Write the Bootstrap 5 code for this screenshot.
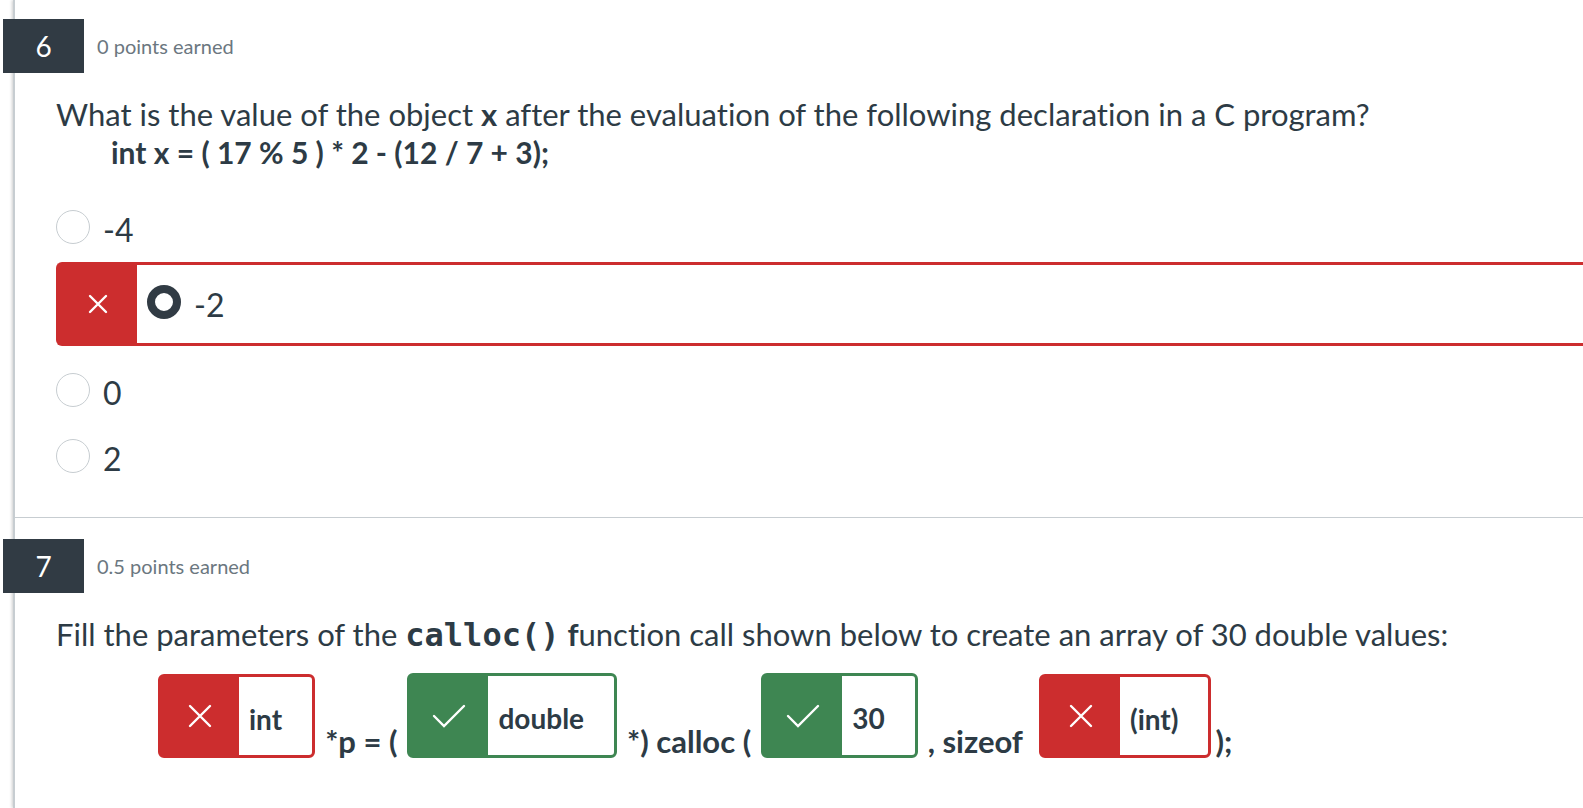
<!DOCTYPE html>
<html lang="en">
<head>
<meta charset="utf-8">
<meta name="viewport" content="width=device-width, initial-scale=1">
<title>Quiz results</title>
<link href="https://cdn.jsdelivr.net/npm/bootstrap@5.3.0/dist/css/bootstrap.min.css" rel="stylesheet">
<style>
  :root { --ink: #2d3b45; --rule: #c7cdd1; --wrong: #cc2d2e; --right: #3e8652; }
  body { font-family: Lato, sans-serif; font-size: 31px; line-height: 38px; font-variant-ligatures: none; color: var(--ink); background: #fff; overflow-x: hidden; }
  .quiz { margin-left: 13px; min-height: 100vh; border-left: 2px solid var(--rule); box-shadow: -1px 0 3px rgba(0, 0, 0, .2); }
  .question { padding: 19px 0 28px; border-bottom: 1px solid var(--rule); }
  .question + .question { padding-top: 21px; border-bottom: 0; }
  .number { width: 81px; height: 54px; margin-left: -12px; background: #313b44; color: #fff; font-size: 28px; }
  .points { margin-left: 13px; font-size: 20px; color: #6b7780; }
  .content-area { padding: 22px 0 0 41px; }
  .code-line { padding-left: 55px; font-size: 30px; }
  .choices { padding-top: 23px; }
  .choice { height: 66px; gap: 13px; font-size: 32px; }
  .choice label { padding-top: 6px; }
  .form-check-input.answer-radio { width: 34px; height: 34px; margin: 0; border: 1px solid var(--rule); background-image: none; opacity: 1; flex: none; }
  .form-check-input.answer-radio:checked { border: 8px solid #313b44; background-color: #fff; }
  .choice .form-check-input ~ label { opacity: 1; }
  .choice.picked { height: 84px; margin: 2px 0 11px; border: 3px solid var(--wrong); border-right: 0; border-radius: 6px 0 0 6px; }
  .picked .verdict { margin-right: -3px; }
  .picked .answer-radio.form-check-input, .picked label { margin-bottom: 4px; }
  .verdict { width: 78px; flex: none; background: var(--wrong); }
  .verdict svg { fill: none; stroke: #fff; stroke-width: 2.4; stroke-linecap: round; }
  code.call { font: bold 32px/32px "DejaVu Sans Mono", monospace; color: inherit; }
  .blanks { padding: 20px 0 0 102px; line-height: 34px; }
  .blanks .between { padding: 0 10px; }
  .blank { height: 84px; border: 3px solid var(--wrong); border-radius: 6px; font-size: 28px; }
  .blank .answer { padding: 5px 30px 0 10px; }
  .blank.ok { height: 85px; border-color: var(--right); }
  .blank.ok .verdict { background: var(--right); }
</style>
</head>
<body>
<main class="quiz">
  <section class="question">
    <header class="d-flex align-items-center">
      <div class="number d-flex align-items-center justify-content-center">6</div>
      <div class="points">0 points earned</div>
    </header>
    <div class="content-area">
      <div>What is the value of the object <b>x</b> after the evaluation of the following declaration in a C program?</div>
      <div class="code-line fw-bold">int x = ( 17 % 5 ) * 2 - (12 / 7 + 3);</div>
      <div class="choices">
        <div class="choice d-flex align-items-center">
          <input class="form-check-input answer-radio" type="radio" name="q6" id="a1" disabled><label for="a1">-4</label>
        </div>
        <div class="choice picked d-flex align-items-center">
          <div class="verdict align-self-stretch d-flex align-items-center justify-content-center">
            <svg width="24" height="24" viewBox="0 0 24 24" aria-label="Incorrect"><path d="M4 4 20 20M20 4 4 20"/></svg>
          </div>
          <input class="form-check-input answer-radio" type="radio" name="q6" id="a2" checked disabled><label for="a2">-2</label>
        </div>
        <div class="choice d-flex align-items-center">
          <input class="form-check-input answer-radio" type="radio" name="q6" id="a3" disabled><label for="a3">0</label>
        </div>
        <div class="choice d-flex align-items-center">
          <input class="form-check-input answer-radio" type="radio" name="q6" id="a4" disabled><label for="a4">2</label>
        </div>
      </div>
    </div>
  </section>
  <section class="question">
    <header class="d-flex align-items-center">
      <div class="number d-flex align-items-center justify-content-center">7</div>
      <div class="points">0.5 points earned</div>
    </header>
    <div class="content-area">
      <div>Fill the parameters of the <code class="call">calloc()</code> <b>f</b>unction call shown below to create an array of 30 double values:</div>
      <div class="blanks d-flex align-items-end fw-bold">
        <div class="blank d-flex">
          <div class="verdict d-flex align-items-center justify-content-center">
            <svg width="28" height="28" viewBox="0 0 28 28" aria-label="Incorrect"><path d="M4 4 24 24M24 4 4 24"/></svg>
          </div>
          <div class="answer align-self-center">int</div>
        </div>
        <div class="between">*p = (</div>
        <div class="blank ok d-flex">
          <div class="verdict d-flex align-items-center justify-content-center">
            <svg width="34" height="28" viewBox="0 0 34 28" aria-label="Correct"><path d="M2 14 12 24 32 4"/></svg>
          </div>
          <div class="answer align-self-center">double</div>
        </div>
        <div class="between">*) calloc (</div>
        <div class="blank ok d-flex">
          <div class="verdict d-flex align-items-center justify-content-center">
            <svg width="34" height="28" viewBox="0 0 34 28" aria-label="Correct"><path d="M2 14 12 24 32 4"/></svg>
          </div>
          <div class="answer align-self-center">30</div>
        </div>
        <div class="between pe-3">, sizeof</div>
        <div class="blank d-flex">
          <div class="verdict d-flex align-items-center justify-content-center">
            <svg width="28" height="28" viewBox="0 0 28 28" aria-label="Incorrect"><path d="M4 4 24 24M24 4 4 24"/></svg>
          </div>
          <div class="answer align-self-center">(int)</div>
        </div>
        <div class="ps-1">);</div>
      </div>
    </div>
  </section>
</main>
<script src="https://cdn.jsdelivr.net/npm/bootstrap@5.3.0/dist/js/bootstrap.bundle.min.js"></script>
</body>
</html>
